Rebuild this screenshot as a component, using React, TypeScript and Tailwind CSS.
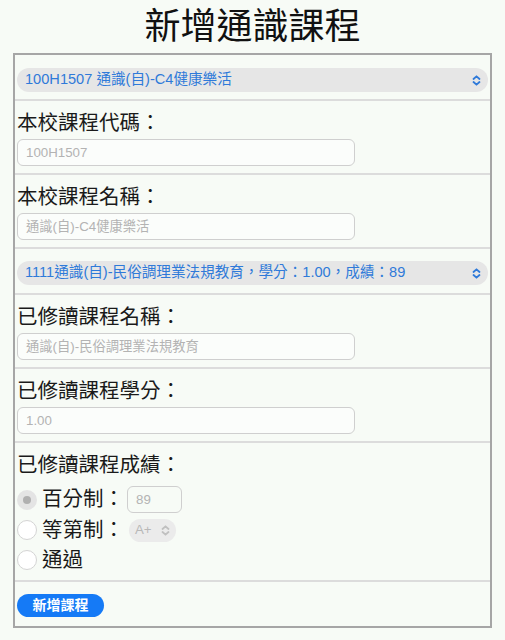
import React from 'react';

const font = { fontFamily: '"Liberation Sans", "Noto Sans CJK TC", sans-serif' };

function Chevrons({ color = '#2f7ad9' }: { color?: string }) {
  return (
    <svg width="9" height="11" viewBox="0 0 9 11" fill="none" stroke={color} strokeWidth="1.8" strokeLinecap="round" strokeLinejoin="round">
      <path d="M1.5 4 L4.5 1.3 L7.5 4" />
      <path d="M1.5 7 L4.5 9.7 L7.5 7" />
    </svg>
  );
}

function BlueSelect({ text }: { text: string }) {
  return (
    <div className="h-[24px] w-full rounded-full bg-[#e6e6e6] flex items-center justify-between pl-[8px] pr-[7px]">
      <span className="text-[14.6px] text-[#2f7ad9] whitespace-nowrap">{text}</span>
      <Chevrons />
    </div>
  );
}

function Field({ label, placeholder }: { label: string; placeholder: string }) {
  return (
    <div className="border-b-2 border-[#dcdcdc] pt-[7px] pb-[7px] px-[2px]">
      <div className="h-[30px] leading-[30px] text-[20.5px] text-[#1a1a1a]">{label}</div>
      <div className="mt-[1px] h-[27px] w-[338px] rounded-[6px] border border-[#cfcfcf] bg-[#fbfdfb] flex items-center pl-[8px] text-[13.3px] text-[#b3b3b3]">
        {placeholder}
      </div>
    </div>
  );
}

export default function App() {
  return (
    <div className="min-h-[640px] w-[505px] bg-[#f7fbf6] text-[#1a1a1a]" style={font}>
      <div className="h-[53px] flex items-center justify-center text-[36px] text-[#111]">新增通識課程</div>
      <div className="mx-[13px] border-2 border-[#a6a6a6]">
        <div className="border-b-2 border-[#dcdcdc] pt-[13px] pb-[7px] px-[2px]">
          <BlueSelect text="100H1507 通識(自)-C4健康樂活" />
        </div>
        <Field label="本校課程代碼：" placeholder="100H1507" />
        <Field label="本校課程名稱：" placeholder="通識(自)-C4健康樂活" />
        <div className="border-b-2 border-[#dcdcdc] pt-[12px] pb-[8px] px-[2px]">
          <BlueSelect text="1111通識(自)-民俗調理業法規教育，學分：1.00，成績：89" />
        </div>
        <Field label="已修讀課程名稱：" placeholder="通識(自)-民俗調理業法規教育" />
        <Field label="已修讀課程學分：" placeholder="1.00" />
        <div className="border-b-2 border-[#dcdcdc] pt-[7px] pb-[5px] px-[2px]">
          <div className="h-[30px] leading-[30px] text-[20.5px]">已修讀課程成績：</div>
          <div className="mt-[4px] h-[31px] flex items-center">
            <span className="w-[20px] h-[20px] rounded-full bg-[#e4e4e4] flex items-center justify-center mr-[5px]">
              <span className="w-[8px] h-[8px] rounded-full bg-[#b0b0b0]" />
            </span>
            <span className="text-[20.5px]">百分制：</span>
            <span className="ml-[3px] h-[27px] w-[55px] rounded-[6px] border border-[#cfcfcf] flex items-center pl-[8px] text-[13.3px] text-[#b3b3b3]">89</span>
          </div>
          <div className="h-[30px] flex items-center">
            <span className="w-[20px] h-[20px] rounded-full border border-[#d4d4d4] bg-white mr-[5px]" />
            <span className="text-[20.5px]">等第制：</span>
            <span className="ml-[5px] h-[23px] w-[47px] rounded-full bg-[#ebebeb] flex items-center justify-between pl-[6px] pr-[6px] text-[13.3px] text-[#b8b8b8]">
              A+
              <Chevrons color="#c0c0c0" />
            </span>
          </div>
          <div className="h-[30px] flex items-center">
            <span className="w-[20px] h-[20px] rounded-full border border-[#d4d4d4] bg-white mr-[5px]" />
            <span className="text-[20.5px]">通過</span>
          </div>
        </div>
        <div className="pt-[12px] pb-[9px] px-[2px]">
          <button className="h-[23px] w-[87px] rounded-full bg-[#157af6] text-white text-[14px] font-bold flex items-center justify-center">
            新增課程
          </button>
        </div>
      </div>
    </div>
  );
}
